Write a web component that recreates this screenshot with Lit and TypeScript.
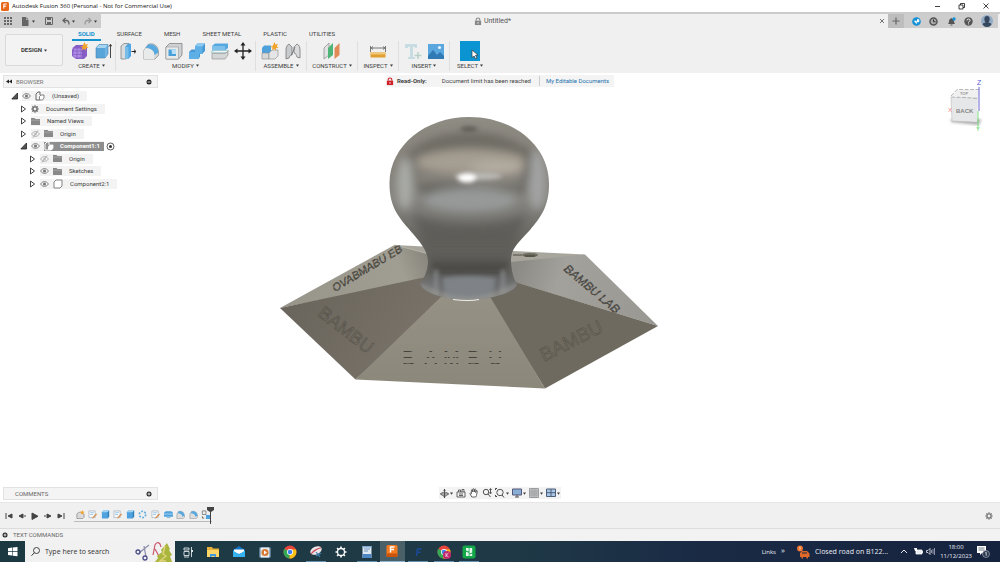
import { LitElement, html, svg, css, nothing } from "lit";
import { customElement } from "lit/decorators.js";
import { classMap } from "lit/directives/class-map.js";

const icon = (body: unknown, w = 18, h = w, box = `0 0 ${w} ${h}`) =>
  html`<svg width=${w} height=${h} viewBox=${box} aria-hidden="true">${body}</svg>`;

const caret = html`<svg class="caret" width="3" height="3" viewBox="0 0 4 4" aria-hidden="true"><path d="M0 .5h4L2 3.8z" fill="currentColor" /></svg>`;

/* ---------- ribbon glyphs, 18 x 18 ---------- */
const form = svg`
  <path d="M2 5.500 5 3h8l3 3v8l-3 3H5l-4-3V8z" fill="#8a5fc9"/>
  <path d="M3 6.500h8v9H4l-2-2z" fill="#b08be6"/>
  <path d="M6 3v13M10 3v13M1.500 9h14M2 12.500h14M12 6.500v10" stroke="#7b55ba" stroke-width=".6" fill="none"/>
  <path d="m13.500 0 1 2.500 2.500-.6-1.300 2.300 2 1.600-2.600.3-.2 2.700-1.700-2-2.300 1.400.7-2.600L9 4.700l2.700-.6z" fill="#f2a32c"/>`;
const extrude = svg`
  <path d="M2 6 5 2.500h9V12l-3 4H2z" fill="#6fb4e4"/><path d="M2 6h9v10H2z" fill="#58a5da"/>
  <path d="M2 6 5 2.500h9L11 6z" fill="#a9d5f2"/><path d="M2 6 5 2.500h9V12l-3 4H2z" fill="none" stroke="#4b84ad" stroke-width=".6"/>
  <path d="M16.500 16V3M15 4.500l1.500-2.200L18 4.500" stroke="#333" stroke-width=".9" fill="none"/>`;
const pressPull = svg`
  <path d="M2 4 5 1.500h5V14l-3 3H2z" fill="#d9dbdc" stroke="#777" stroke-width=".7"/>
  <path d="M6 5l3-3.200h3V14l-2.500 3H6z" fill="#4fa6e2"/><path d="M6 5h3.500v12H6z" fill="#78bdea"/>
  <path d="M12.500 9.500h4M15 7.700l2 1.800-2 1.800" stroke="#222" fill="none"/>`;
const fillet = svg`
  <path d="M1.500 17V9L6 2.500Q8 1.500 11 2q5 1.500 5.500 8v3.500L13 17z" fill="#d2d5d6" stroke="#888" stroke-width=".7"/>
  <path d="M6 2.500C12 1 16 5 16.500 10.500L12.500 13C12 8.500 9 6 3.500 6.200z" fill="#58a9df"/>
  <path d="M1.500 17V9l2-2.800C9 6 12 9 12.300 13v4z" fill="#e9ebeb"/>`;
const shell = svg`
  <path d="M1 5 4.500 1.500H17V13l-3.500 4H1z" fill="#cfd2d4" stroke="#777" stroke-width=".7"/>
  <path d="M1 5h12.500v12H1z" fill="#e8eaea" stroke="#888" stroke-width=".5"/>
  <path d="M3.500 7.500H11V14H3.500z" fill="#4b9fd8"/><path d="M6.500 7.500H11V12H7z" fill="#b8def5"/>`;
const combine = svg`
  <path d="M1 10 3.500 7.500H7V4l2.500-2.500H17V9l-3 3h-2v3l-2 2H1z" fill="#4598d4"/>
  <path d="M1 10h6V4.500h7.500V12H11v5H1z" fill="#5dafe6"/>
  <path d="M7 4.500 9.500 1.500H17l-2.500 3z" fill="#8bcaf0"/>`;
const split = svg`
  <path d="M1 4 4 1.500h13V6l-3 2.500H1z" fill="#56a9e0"/><path d="M1 4h13v4H1z" fill="#7fc0ea"/>
  <path d="m0 9.500 4-1h14l-3 2H0z" fill="#eef4f8" stroke="#6aa" stroke-width=".4"/>
  <path d="M1 11.500h13l3-2V13l-3 4H1z" fill="#d4d7d8" stroke="#888" stroke-width=".6"/>`;
const move = svg`<path d="M9 2v14M2 9h14" stroke="#222" stroke-width="1.300"/>
  <path d="m9 0 2.500 3.500h-5zM9 18l2.500-3.500h-5zM0 9l3.500-2.500v5zM18 9l-3.500-2.500v5z" fill="#222"/>`;
const newComp = svg`
  <path d="M1 6 3 3.500h7V10L8 12H1z" fill="#4da2dc"/><path d="M1 11h7v6H1z" fill="#d6d9da" stroke="#888" stroke-width=".6"/>
  <path d="M8 11l3-3h6v6l-3 3H8z" fill="#e3e5e6" stroke="#888" stroke-width=".6"/>
  <path d="m13.500 0 1 2.500 2.500-.6-1.300 2.300 2 1.600-2.600.3-.2 2.700-1.700-2-2.300 1.400.7-2.600L9 4.700l2.700-.6z" fill="#f2a32c"/>`;
const joint = svg`
  <path d="M2 8c0-3 1-5 3-6l3 3v8c-2 0-2 1-3 3l-3 1z" fill="#c8cbcd" stroke="#777" stroke-width=".8"/>
  <path d="M16 8c0-3-1-5-3-6l-3 3v6c2 0 2 2 3 4l3 1z" fill="#d9dbdc" stroke="#777" stroke-width=".8"/>
  <path d="M7.500 13 11 5" stroke="#666" stroke-width=".8"/>`;
const planes = svg`
  <path d="M1 6 6 1v12l-5 4z" fill="#e0e3e3" stroke="#888" stroke-width=".7"/>
  <path d="m5 6 5-5v12l-5 4z" fill="#4fb477"/><path d="m11.500 6 5-5v12l-5 4z" fill="#e08a58"/>`;
const measure = svg`
  <path d="M1.500 4v6M16.500 4v6M2 6h14M4 4.500 2.200 6 4 7.500M14 4.500 15.800 6 14 7.500" stroke="#555" stroke-width=".8" fill="none"/>
  <path d="M1.500 10.500h15v5h-15z" fill="#e0a02f"/><path d="M1.500 10.500h15v2h-15z" fill="#f1c879"/>`;
const insertText = svg`<g opacity=".55"><path d="M1 2h12v4h-2V5H9v10h2v2H4v-2h2V5H4v1H1z" fill="#a8cfd8"/>
  <path d="M14 10v7M10.500 13.500h7" stroke="#8bb9ae" stroke-width="1.500"/></g>`;
const picture = svg`<path d="M1 2h16v15H1z" fill="#5aa6df"/><path d="m1 14 5-6 4 5 3-3 4 4v3H1z" fill="#2f79b5"/>
  <circle cx="12.500" cy="5.500" r="1.600" fill="#e4f3fc"/>`;
const selectArrow = svg`<path d="M0 0h20v20H0z" fill="#0b94d2"/><path d="m12 9 6 5-2.500.3 1.500 2.700-1.500.8-1.400-2.800-2.100 1.500z" fill="#fff" stroke="#333" stroke-width=".7"/>`;

/* ---------- small glyphs ---------- */
const gear = (c: string, s = 8) =>
  icon(svg`<circle cx="5" cy="5" r="2.600" fill="none" stroke=${c} stroke-width="1.700"/>
    <path d="M5 .3v1.600M5 8.100v1.600M.3 5h1.600M8.100 5h1.600M1.700 1.700l1.100 1.100M7.200 7.200l1.100 1.100M8.300 1.700 7.200 2.800M2.800 7.200 1.700 8.300" stroke=${c} stroke-width="1.500"/>`, s, s, "0 0 10 10");
const lock = (c: string) =>
  icon(svg`<path d="M2.500 4V3a2 2 0 0 1 4 0v1" fill="none" stroke=${c} stroke-width="1.200"/><path d="M1 4h7v5H1z" fill=${c}/><path d="M4 5.500h1v2H4z" fill="#eee"/>`, 8, 9, "0 0 9 10");
const eye = (off = false) =>
  icon(svg`<path d="M.5 4Q5-1.500 9.500 4 5 9.500.5 4z" fill="none" stroke=${off ? "#aaa" : "#777"}/><circle cx="5" cy="4" r="1.700" fill=${off ? "#ccc" : "#777"}/>
  ${off ? svg`<path d="m2 8 6-8" stroke="#999" stroke-width=".8"/>` : nothing}`, 9, 8, "0 0 10 8");
const folder = icon(svg`<path d="M0 1h3.500l1 1H9v6H0z" fill="#898989"/><path d="M0 3.200h9" stroke="#b5b5b5" stroke-width=".6"/>`, 9);
const comp = (c = "#666") => icon(svg`<path d="M1 9V3l2-2h2v3M1 9h3.500" fill="none" stroke=${c}/><path d="M4.500 5.500 6 4h3v3L7.500 9h-3z" fill="#fff" stroke=${c} stroke-width=".8"/>`, 10, 10, "0 0 10 10");
const body = icon(svg`<path d="M1 3 3 1h6v6L7 9H1z" fill="#fff" stroke="#777" stroke-width=".9"/>`, 10);
const twisty = (open: boolean) =>
  open
    ? icon(svg`<path d="M6.500 1v6H.8z" fill="#555" stroke="#222" stroke-width=".8"/>`, 7, 8)
    : icon(svg`<path d="M1.500 1v6l4-3z" fill="#fff" stroke="#333" stroke-width=".9"/>`, 7, 8);
const dot = (plus: boolean) => icon(svg`<circle cx="3" cy="3" r="2.500" fill="#222"/><path d=${plus ? "M3 1.500v3M1.500 3h3" : "M1.500 3h3"} stroke="#fff" stroke-width=".8"/>`, 6);

/* ---------- timeline glyphs, 10 x 10 ---------- */
const tSketch = svg`<path d="M1 1h7v7.500H1z" fill="#f6f8fa" stroke="#9aa9b5" stroke-width=".7"/><path d="M2.500 3h4M2.500 5h3" stroke="#6aaee0" stroke-width=".7"/><path d="m9 4-4 4-.5 1.500L6 9l4-4z" fill="#d98e4b"/>`;
const tExtrude = svg`<path d="m1 2.500 1.500-2H9V7L7.500 9.500H1z" fill="#4fa2dd"/><path d="m1 2.500 1.500-2H9l-1.500 2z" fill="#a3d3f3"/><path d="M7.500 2.500 9 .5V7L7.500 9.500z" fill="#2f7fb9"/>`;
const tComp = svg`<path d="M1 4.500C2 2.500 4 2.500 5 2.500l4 2V8L7.500 9.500H1z" fill="#dadada" stroke="#888" stroke-width=".8"/><path d="m7 0 .7 1.700L9.500 2 8.200 3.200 8.300 5 7 4 5.500 5l.2-1.800L4.500 2l1.800-.3z" fill="#f2a32c"/>`;
const tFillet = svg`<path d="M1 9.500V4.500L3 1.500Q8 .5 9.500 6v2L8 9.500z" fill="#dedede" stroke="#999" stroke-width=".7"/><path d="M3 1.500C7 .5 9.300 3 9.500 6.500L7 7.500C7 5 5 3.500 1.800 3.500z" fill="#58a9df"/>`;
const tPattern = svg`<circle cx="5" cy="5" r="3.500" fill="none" stroke="#58a9df" stroke-width="1.800" stroke-dasharray="2 1.650"/>`;
const tRevolve = svg`<path d="M0 3 2 1.500h6L10 3v4.500H0z" fill="#4fa2dd"/><path d="M0 4.500h10" stroke="#c9e5f7" stroke-width=".8" fill="none"/><path d="M3 7.500h4v1.500H3z" fill="#8abfe2"/>`;
const tCopy = svg`<path d="M1.500 1h4v4h-4z" fill="#eee" stroke="#666" stroke-width=".8"/><path d="M1.500 7v2h2" fill="none" stroke="#666"/><path d="M5.500 5.500H10V10H5.500z" fill="#4fa2dd"/>`;
const timeline: [string, unknown][] = [
  ["Component", tComp], ["Sketch 1", tSketch], ["Extrude 1", tExtrude], ["Sketch 2", tSketch], ["Extrude 2", tExtrude], ["Pattern", tPattern],
  ["Sketch 3", tSketch], ["Revolve", tRevolve], ["Fillet 1", tFillet], ["Fillet 2", tFillet], ["Copy", tCopy],
];

/* ---------- taskbar glyphs, 14 x 14 ---------- */
const chromeLogo = svg`<circle cx="7" cy="7" r="6.500" fill="#e8453c"/><path d="M7 7 1.300 3.800A6.500 6.500 0 0 0 6.500 13.500z" fill="#34a853"/>
  <path d="M7 7 6.500 13.500A6.500 6.500 0 0 0 12.900 4.500H7z" fill="#fbc116"/><circle cx="7" cy="7" r="3" fill="#fff"/><circle cx="7" cy="7" r="2.300" fill="#3f82ee"/>`;
const tasks: { name: string; art: unknown; on?: boolean; run?: boolean }[] = [
  { name: "Task View", art: svg`<path d="M3 3h5v2H3zM3 6.500h5v4H3zM3 12h5M10.500 2v10" fill="none" stroke="#dde4e6" stroke-width=".9"/><path d="M10 5h2v2h-2z" fill="#dde4e6"/>` },
  { name: "File Explorer", art: svg`<path d="M1 2h5l1 1.500h6V12H1z" fill="#e9b03a"/><path d="M1 5h12v7H1z" fill="#fbd768"/><path d="M4 9h6v3H8.500v-1h-3v1H4z" fill="#3f9ae0"/>` },
  { name: "Mail", art: svg`<path d="M1 5 7 1l6 4v7H1z" fill="#1272c4"/><path d="M2 4.500h10V7l-5 2-5-2z" fill="#fff"/><path d="m1 5.500 6 4 6-4V12H1z" fill="#35b2f0"/>` },
  { name: "Movies", art: svg`<path d="M1.500 2.500h11v10h-11z" fill="#9ab7cf"/><path d="M3 2.500h8v10H3z" fill="#e8eef2"/><circle cx="7" cy="7.500" r="3.600" fill="#d57a33"/><path d="m6 5.500 3 2-3 2z" fill="#fff"/>` },
  { name: "Chrome", art: chromeLogo },
  { name: "Snipping Tool", run: true, art: svg`<ellipse cx="7" cy="5.500" rx="6" ry="3.800" transform="rotate(-25 7 5.500)" fill="#ede6e8"/><path d="M2 9C4 6 9 3 12 3" stroke="#cc4d5c" stroke-width="1.200" fill="none"/><path d="m7 7 4 5M12 8l-5 3" stroke="#3f82b5" stroke-width="1.200"/>` },
  { name: "Settings", art: svg`<circle cx="7" cy="7" r="3.500" fill="none" stroke="#fff" stroke-width="1.300"/><path d="M7 1.500v2M7 10.500v2M1.500 7h2M10.500 7h2M3.100 3.100l1.300 1.300M9.600 9.600l1.300 1.300M10.900 3.100 9.600 4.400M4.400 9.600l-1.300 1.300" stroke="#fff" stroke-width="1.600"/>` },
  { name: "Notepad", run: true, art: svg`<path d="M2.500 1h9v12h-9z" fill="#dfe9f3"/><path d="M2.500 9h9v4h-9z" fill="#4e88c4"/><path d="M4 4h6M4 6h4" stroke="#7196bd"/><path d="M2.500 1h9v1.500h-9z" fill="#7fa9d6"/>` },
  { name: "Fusion 360", on: true, art: svg`<rect x="1.500" y="1" width="11" height="12" rx="1.500" fill="#f47a1f"/><path d="M1.500 9.500h11V12q0 1-1.500 1H3q-1.500 0-1.500-1z" fill="#c9540b"/><path d="M5.500 8.500V3h4M5.500 5.500H9" fill="none" stroke="#fff" stroke-width="1.400"/>` },
  { name: "Files", run: true, art: svg`<path d="M5.500 11 6.500 4h4M6 7.300h3.500" fill="none" stroke="#1b4a9b" stroke-width="1.500"/>` },
  { name: "Chrome profile", run: true, art: svg`${chromeLogo}<circle cx="10" cy="10" r="4" fill="#c2276d"/><path d="M9 8v4M11.500 8 9.300 10l2.200 2" stroke="#fff" stroke-width=".7" fill="none"/>` },
  { name: "Bambu Studio", run: true, art: svg`<rect x=".5" y=".5" width="13" height="13" rx="2" fill="#13a74a"/><path d="M4 3h2.700v3.500L4 5.500zM4 6.700l2.700 1V11H4zM7.500 3h2.700v4.500l-2.700 1zM7.500 9.500l2.700-1V11H7.500z" fill="#e6f7ec"/>` },
];

const groups: { label: string; icons: [string, unknown][]; size?: number; cls?: string }[] = [
  { label: "CREATE", icons: [["Create Form", form], ["Extrude", extrude]] },
  { label: "MODIFY", icons: [["Press Pull", pressPull], ["Fillet", fillet], ["Shell", shell], ["Combine", combine], ["Split Body", split], ["Move", move]] },
  { label: "ASSEMBLE", icons: [["New Component", newComp], ["Joint", joint]], cls: "wide" },
  { label: "CONSTRUCT", icons: [["Offset Plane", planes]], cls: "wide" },
  { label: "INSPECT", icons: [["Measure", measure]], cls: "mid" },
  { label: "INSERT", icons: [["Insert Derive", insertText], ["Canvas", picture]], cls: "wide" },
  { label: "SELECT", icons: [["Select", selectArrow]], size: 20, cls: "last" },
];

interface Node { level: number; open?: boolean; eye?: "on" | "off"; art: unknown; text: string; sel?: boolean }
const nodes: Node[] = [
  { level: 0, open: true, eye: "on", art: comp(), text: "(Unsaved)" },
  { level: 1, art: gear("#666"), text: "Document Settings" },
  { level: 1, art: folder, text: "Named Views" },
  { level: 1, eye: "off", art: folder, text: "Origin" },
  { level: 1, open: true, eye: "on", art: comp("#fff"), text: "Component1:1", sel: true },
  { level: 2, eye: "off", art: folder, text: "Origin" },
  { level: 2, eye: "on", art: folder, text: "Sketches" },
  { level: 2, eye: "on", art: body, text: "Component2:1" },
];

@customElement("model-view")
class ModelView extends LitElement {
  static styles = css`
    :host { display: block; }
    svg { display: block; width: 100%; height: 100%; }
    .engraved { font-family: "Liberation Sans", Arial, sans-serif; }
  `;
  render() {
    const knob = "M469 117C514 117 549 146 549 184C549 206 541 217 530 230C519 242 511 248 511 260C511 270 513 278 517 284C516 291 500 296 488 298Q468 302 448 298C434 296 422 290 420 284C426 276 428 268 428 261C427 248 418 240 408 228C396 214 389.500 204 389.500 183C390 145 426 117 469 117z";
    return html`<svg viewBox="0 73 1000 429" role="img" aria-label="Hexagonal stamp with a round metal handle">
      <defs>
        <clipPath id="k"><path d=${knob} /></clipPath>
        <filter id="b2" x="-50%" y="-50%" width="200%" height="200%"><feGaussianBlur stdDeviation="2" /></filter>
        <filter id="b4" x="-50%" y="-50%" width="200%" height="200%"><feGaussianBlur stdDeviation="4" /></filter>
        <linearGradient id="v" x1="0" y1="117" x2="0" y2="300" gradientUnits="userSpaceOnUse">
          <stop offset="0" stop-color="#8f8c84" /><stop offset=".12" stop-color="#8a877f" /><stop offset=".28" stop-color="#85817a" />
          <stop offset=".45" stop-color="#85847f" /><stop offset=".58" stop-color="#73726d" /><stop offset=".7" stop-color="#62605b" />
          <stop offset=".85" stop-color="#5a5956" /><stop offset=".93" stop-color="#737577" /><stop offset="1" stop-color="#8b8c8c" />
        </linearGradient>
        <linearGradient id="ul" x1="290" y1="310" x2="425" y2="250" gradientUnits="userSpaceOnUse">
          <stop offset="0" stop-color="#98958a" /><stop offset=".8" stop-color="#a09d92" /><stop offset="1" stop-color="#88867d" />
        </linearGradient>
        <linearGradient id="ur" x1="515" y1="270" x2="655" y2="320" gradientUnits="userSpaceOnUse">
          <stop offset="0" stop-color="#8c8a85" /><stop offset=".3" stop-color="#a3a19c" /><stop offset="1" stop-color="#9a9892" />
        </linearGradient>
        <linearGradient id="fr" x1="0" y1="298" x2="0" y2="388" gradientUnits="userSpaceOnUse">
          <stop offset="0" stop-color="#959184" /><stop offset="1" stop-color="#8b877a" />
        </linearGradient>
        <linearGradient id="dl" x1="300" y1="300" x2="400" y2="360" gradientUnits="userSpaceOnUse">
          <stop offset="0" stop-color="#6b665d" /><stop offset="1" stop-color="#777168" />
        </linearGradient>
        <linearGradient id="cut" x1="0" y1="351" x2="0" y2="357.200" gradientUnits="userSpaceOnUse" spreadMethod="repeat">
          <stop offset="0" stop-color="#45433a" /><stop offset=".16" stop-color="#45433a" /><stop offset=".16" stop-color="#45433a" stop-opacity="0" /><stop offset="1" stop-color="#45433a" stop-opacity="0" />
        </linearGradient>
      </defs>
      <path d="M394.500 245 585 254.500 518 284 420 280z" fill="#a8a69c" />
      <path d="M280 308 394.500 245 430 255 440 276z" fill="url(#ul)" />
      <path d="M585 254.500 658 326 505 279 510 262z" fill="url(#ur)" />
      <path d="M280 308 440 274 445 300 355.500 379.500z" fill="url(#dl)" />
      <path d="M658 326 512 281 488 296 545 388.500z" fill="#6e6a5f" />
      <path d="M355.500 379.500 443 295 489 295 545 388.500z" fill="url(#fr)" />
      <path d="M394.500 245 426 253" stroke="#b8b6ac" stroke-width=".7" />
      <ellipse cx="530" cy="255" rx="8" ry="2" fill="#6b6a5c" /><path d="M513 255h9M525 256h10" stroke="#35352c" stroke-width=".8" />
      <g class="engraved">
        <text font-size="11" transform="translate(335 292) rotate(-31)" fill="#56544b" font-style="italic" stroke="#44423a" stroke-width=".5" stroke-dasharray="3 2">OVABMABU EB</text>
        <text font-size="12" transform="translate(563 270) rotate(40)" fill="#5a5852" font-style="italic" stroke="#3b3a36" stroke-width=".5" stroke-dasharray="3 2">BAMBU LAB</text>
        <text font-size="18" transform="translate(317 315) rotate(38)" fill="none" stroke="#4f4b42" stroke-width=".5">BAMBU</text>
        <text font-size="19" transform="translate(544 362) rotate(-27)" fill="none" stroke="#545147" stroke-width=".5">BAMBU</text>
        <text x="402 424 443 467 488" y="365" font-size="20" fill="url(#cut)">BAMBU</text>
      </g>
      <path d=${knob} fill="url(#v)" />
      <g clip-path="url(#k)">
        <g filter="url(#b4)">
          <path d="M402 160Q425 132 470 132T536 160L520 156Q470 140 420 156z" fill="#66635b" opacity=".75" />
          <ellipse cx="472" cy="162" rx="56" ry="12" fill="#a59e92" />
          <ellipse cx="497" cy="168" rx="26" ry="7" fill="#b3aca0" />
          <path d="M418 184Q445 180 470 185T522 184L516 191Q470 189 424 195z" fill="#6a6862" />
          <ellipse cx="470" cy="200" rx="46" ry="12" fill="#969998" />
          <path d="M412 214Q470 236 528 214L512 244H425z" fill="#5c5954" opacity=".75" />
          <ellipse cx="405" cy="184" rx="8" ry="26" fill="#a9aaa6" />
          <ellipse cx="537" cy="180" rx="9" ry="30" fill="#a1a3a2" />
          <path d="M418 148Q411 165 417 192" stroke="#716f69" stroke-width="4" fill="none" />
          <path d="M526 148Q530 170 522 194" stroke="#67655f" stroke-width="6" fill="none" />
          <path d="M430 262h80v12h-80z" fill="#454440" opacity=".7" />
          <path d="M412 242Q424 256 426 285" stroke="#7d7c79" stroke-width="4" fill="none" />
          <path d="M528 242Q514 256 513 280" stroke="#7a7a78" stroke-width="4" fill="none" />
        </g>
        <g filter="url(#b2)">
          <ellipse cx="469" cy="129" rx="9" ry="2.500" fill="#5c5a53" />
          <ellipse cx="478" cy="176" rx="24" ry="4" fill="#b9b7b2" /><ellipse cx="467" cy="178" rx="9" ry="4.500" fill="#fff" />
          <path d="M442 278Q468 274 496 278L490 300H448z" fill="#7f8387" />
          <path d="M436 270v28M503 270v24" stroke="#858788" stroke-width="4" /><path d="M441 276v24M497 276v22" stroke="#5e5f62" stroke-width="2" />
        </g>
        <path d="M420 285Q468 314 518 284" stroke="#a5a39a" fill="none" stroke-width="2" filter="url(#b2)" />
      </g>
      <path d="M453 299.500q16 2 26 0" stroke="#eeeeea" stroke-width="1.200" fill="none" />
    </svg>`;
  }
}

@customElement("app-root")
class AppRoot extends LitElement {
  static styles = css`
    :host { display: flex; flex-direction: column; height: 100vh; overflow: hidden; background: #fff; color: #3c3c3c;
      font: 6px/8px Roboto, "Liberation Sans", sans-serif; --ui: "Open Sans", "Noto Sans", sans-serif; }
    * { box-sizing: border-box; }
    svg { display: block; flex: none; }
    button { all: unset; box-sizing: border-box; display: flex; align-items: center; white-space: nowrap; }
    .caret { margin-left: 2px; }
    .row { display: flex; align-items: center; }
    .fill { flex: 1; }

    .title { height: 12px; padding: 0 10px 0 1px; gap: 3px; font-family: var(--ui); color: #111; }
    .title .wins { display: flex; gap: 16px; }
    .docs { height: 16px; border-top: 2px solid #cbcbcb; background: #f0f0f0; align-items: stretch; }
    .quick { width: 101px; padding: 0 4px; background: #cdcdcd; justify-content: space-between; }
    .tab { flex: 1; justify-content: center; gap: 2px; padding-left: 8px; color: #555; font-size: 7px; }
    .tabclose { padding: 0 3px; }
    .account { width: 110px; background: #cdcdcd; justify-content: space-between; padding-right: 5px; margin-right: 2px; }
    .plus { width: 16px; height: 14px; background: #bdbdbd; justify-content: center; }

    .ribbon { display: flex; height: 45px; background: #f0f0f0; padding-left: 5px; }
    .workspace { width: 58px; height: 32px; margin-top: 6px; justify-content: center; border: 1px solid #dadada; border-radius: 2px; font-weight: bold; background: #f3f3f3; }
    .main { flex: 1; padding-left: 5px; }
    .tabs { display: flex; gap: 10px; padding-left: 4px; }
    .tabs button { height: 13px; padding: 1px 6px 0; border-bottom: 2px solid transparent; }
    .tabs .active { color: #1492d0; border-color: #1492d0; font-weight: bold; }
    .groups { display: flex; }
    .group { display: flex; flex-direction: column; align-items: center; height: 30px; padding: 0 3px; border-right: 1px solid #dfdfdf; }
    .icons { display: flex; align-items: center; gap: 5px; height: 20px; }
    .group > button { height: 9px; }
    .wide { min-width: 51px; } .mid { min-width: 41px; } .last { min-width: 40px; border: 0; }

    .canvas { flex: 1; min-height: 0; position: relative; display: grid; grid-template-columns: 1fr auto 1fr; grid-template-rows: auto 1fr auto; padding: 2px 3px; }
    model-view { position: absolute; inset: 0; }
    .canvas > :not(model-view) { position: relative; }
    .panel { width: 155px; height: 13px; padding: 0 5px 0 2px; border: 1px solid #e2e2e2; background: #f4f4f4; color: #777; gap: 4px; }
    .panel.low { padding-left: 11px; grid-row: 3; color: #666; }
    .tree { list-style: none; margin: 2px 0 0; padding: 0 0 0 8px; display: grid; grid-auto-rows: 1fr; height: 100px; }
    .tree li { display: flex; align-items: center; }
    .l1 { padding-left: 9px; } .l2 { padding-left: 18px; }
    .cell { display: flex; align-items: center; gap: 4px; height: 10px; margin-left: 4px; background: #f3f3f3; }
    .name { padding: 0 8px 0 3px; height: 10px; line-height: 10px; }
    .pick { display: flex; align-items: center; height: 9px; background: #8e8e8e; color: #fff; font-weight: bold; }
    .pick .name { padding: 0 4px 0 6px; }
    .target { margin-left: 2px; }
    .notice { height: 12px; padding: 0 5px 0 0; background: #f4f4f4; gap: 3px; align-self: start; color: #444; }
    .notice .msg { padding: 0 8px 0 12px; border-right: 1px solid #ccc; line-height: 10px; }
    .notice a { color: #2272ad; text-decoration: none; padding-left: 3px; }
    .cube { justify-self: end; grid-column: 3; grid-row: 1 / 3; margin: 4px 11px 0 0; }
    .nav { grid-row: 3; grid-column: 2; justify-self: center; height: 12px; gap: 3px; padding: 0 1px; background: #f3f3f3; }
    .nav .caret { margin-left: 1px; }

    .timeline { height: 26px; background: #f0f0f0; padding: 0 7px 0 4px; border-top: 1px solid #e6e6e6; }
    .play { display: flex; gap: 3px; }
    .track { position: relative; display: grid; grid-auto-flow: column; grid-auto-columns: 1fr; width: 138px; margin-left: 8px; }
    .step { border-bottom: 1px solid #bbb; padding: 1px 0 2px; justify-content: center; }
    .marker { position: absolute; right: -2px; top: -2px; }
    .commands { height: 13px; background: #f2f2f2; border-top: 1px solid #dcdcdc; padding-left: 2px; gap: 5px; color: #666; }

    .taskbar { height: 21px; background: linear-gradient(90deg, #1c3942, #1f3a46 50%, #1a2a45 70%, #16233f); color: #e8edf2; font-family: var(--ui); }
    .start { width: 25px; height: 21px; justify-content: center; }
    .search { width: 150px; height: 21px; background: #f1f1f1; padding-left: 6px; gap: 5px; color: #333; }
    .search input { all: unset; flex: 1; min-width: 0; font: 7px/12px var(--ui); color: #333; }
    .search input::placeholder { color: #333; opacity: 1; }
    .apps { display: flex; width: 307px; height: 21px; }
    .apps button { flex: 1; justify-content: center; height: 21px; }
    .apps .run { background: linear-gradient(#6590b0, #6590b0) center bottom / 20px 1px no-repeat; }
    .apps .on { background: #4a6069; border-bottom: 1px solid #8fb5d0; }
    .tray { gap: 3px; padding-right: 10px; font-size: 7px; }
    .links { font-size: 6px; gap: 5px; margin-right: 9px; }
    .links span { font-size: 8px; align-self: start; line-height: 4px; }
    .news { padding: 0 6px 0 2px; }
    .clock { text-align: center; font-size: 6px; line-height: 9px; margin: 0 2px; }
  `;

  private tree() {
    return html`<ul class="tree">${nodes.map((n) => html`
      <li class=${`l${n.level}`}>${twisty(!!n.open)}
        <span class="cell">
          ${n.eye ? eye(n.eye === "off") : nothing}
          ${n.sel ? html`<span class="pick">${n.art}<span class="name">${n.text}</span></span>`
            : html`${n.art}<span class="name">${n.text}</span>`}
        </span>
        ${n.sel ? html`<span class="target">${icon(svg`<circle cx="4.500" cy="4.500" r="3.500" fill="#fff" stroke="#333" stroke-width=".8"/><circle cx="4.500" cy="4.500" r="1.500" fill="#333"/>`, 9)}</span>` : nothing}
      </li>`)}</ul>`;
  }

  render() {
    const g = "#666";
    return html`
      <header class="title row">
        ${icon(svg`<rect width="8" height="9" rx="1.500" fill="#e8661a"/><path d="M2.800 6.500V2h3M2.800 4.200h2.500" stroke="#fff" fill="none"/>`, 8, 9)}
        <span>Autodesk Fusion 360 (Personal - Not for Commercial Use)</span><span class="fill"></span>
        <div class="wins">
          <button aria-label="Minimise">${icon(svg`<path d="M1 4.500h5" stroke="#111" stroke-width=".8"/>`, 8)}</button>
          <button aria-label="Restore">${icon(svg`<path d="M1 3h4v4H1zM2.500 3V1.500h4v4H5" fill="none" stroke="#111" stroke-width=".8"/>`, 8)}</button>
          <button aria-label="Close">${icon(svg`<path d="m1.500 1.500 5 5M6.500 1.500l-5 5" stroke="#111" stroke-width=".8"/>`, 8)}</button>
        </div>
      </header>
      <div class="docs row">
        <div class="quick row">
          <button aria-label="Data panel">${icon(svg`<path d="M0 0h2v2H0zM3 0h2v2H3zM6 0h2v2H6zM0 3h2v2H0zM3 3h2v2H3zM6 3h2v2H6zM0 6h2v2H0zM3 6h2v2H3zM6 6h2v2H6z" fill=${g}/>`, 8)}</button>
          <button aria-label="File">${icon(svg`<path d="M1 0h4v3h2.500v6H1zM5.500 0l2 2.500h-2z" fill=${g}/>`, 9)}${caret}</button>
          <button aria-label="Save">${icon(svg`<path d="M.5.500h7v7h-7z" fill="none" stroke=${g}/><path d="M2 0h4v3H2zM2 5h4v3H2z" fill=${g}/>`, 8)}</button>
          <button aria-label="Undo">${icon(svg`<path d="M3.500 1 1 3.500 3.500 6M1 3.500h3.500Q7 3.500 7 7.500" fill="none" stroke=${g} stroke-width="1.300"/>`, 8)}${caret}</button>
          <button aria-label="Redo">${icon(svg`<path d="M4.500 1 7 3.500 4.500 6M7 3.500H3.500Q1 3.500 1 7.500" fill="none" stroke="#999" stroke-width="1.300"/>`, 8)}${caret}</button>
        </div>
        <div class="tab row">${lock("#888")}<span>Untitled*</span></div>
        <button class="tabclose" aria-label="Close tab">${icon(svg`<path d="m1 1 4 4M5 1 1 5" stroke="#555" stroke-width=".8"/>`, 6)}</button>
        <div class="account row">
          <button class="plus" aria-label="New tab">${icon(svg`<path d="M4 .5v7M.5 4h7" stroke="#666" stroke-width="1.200"/>`, 8)}</button>
          <button aria-label="Extensions">${icon(svg`<circle cx="4.500" cy="4.500" r="4.300" fill="#1492d8"/><path d="M2 4h2.500v3M5 2.500h2v2.500H5" fill="#fff" stroke="#fff" stroke-width=".5"/>`, 9)}</button>
          <button aria-label="Job status">${icon(svg`<circle cx="4.500" cy="4.500" r="3.500" fill="#aaa" stroke="#555" stroke-width="1.500"/><path d="M4.500 2.500v2.200h2" stroke="#333" fill="none"/>`, 9)}</button>
          <button aria-label="Notifications">${icon(svg`<path d="M1 7Q2 6 2 4t2.500-3Q7 2 7 4t1 3zM3.500 7.500h2v1h-2z" fill="#555"/><circle cx="7" cy="2" r="1.700" fill="#1492d8"/>`, 9)}</button>
          <button aria-label="Help">${icon(svg`<circle cx="4.500" cy="4.500" r="4.200" fill="#555"/><path d="M3 3.500Q3 2 4.500 2T6 3.500q0 .8-1.500 1.500v.6M4.500 6.500v.9" stroke="#fff" stroke-width=".9" fill="none"/>`, 9)}</button>
          <button aria-label="Account">${icon(svg`<circle cx="6" cy="6" r="6" fill="#93abc4"/><path d="M3.300 4Q3.500 1 6 1t2.700 3Q8.500 7 7.500 7.500q3 .5 3 2Q8.500 12 6 12T1.500 9.500q0-1.500 3-2Q3.500 7 3.300 4z" fill="#36485d"/>`, 12)}</button>
        </div>
      </div>
      <div class="ribbon">
        <button class="workspace">DESIGN ${caret}</button>
        <div class="main">
          <nav class="tabs">${["SOLID", "SURFACE", "MESH", "SHEET METAL", "PLASTIC", "UTILITIES"].map(
            (t, i) => html`<button class=${classMap({ active: i === 0 })}>${t}</button>`)}</nav>
          <div class="groups">${groups.map((gr) => html`
            <div class="group ${gr.cls ?? ""}">
              <div class="icons">${gr.icons.map(([n, a]) => html`<button aria-label=${n}>${icon(a, gr.size ?? 18)}</button>`)}</div>
              <button>${gr.label}${caret}</button>
            </div>`)}</div>
        </div>
      </div>
      <main class="canvas">
        <model-view></model-view>
        <section>
          <div class="panel row">${icon(svg`<path d="M3 .5v4L0 2.500zM6 .5v4L3 2.500z" fill="#222"/>`, 6, 5)}<span>BROWSER</span><span class="fill"></span>${dot(false)}</div>
          ${this.tree()}
        </section>
        <div class="notice row">${lock("#cf2027")}<b>Read-Only:</b><span class="msg">Document limit has been reached</span><a href="#">My Editable Documents</a></div>
        <div class="cube">${icon(svg`
          <defs><filter id="s"><feGaussianBlur stdDeviation="1.500"/></filter></defs>
          <path d="m3 43 28 3 2-6H3z" fill="#aaa" filter="url(#s)"/>
          <path d="m3 17 6-6h21l1 3-2 6z" fill="#f0f0f0"/><path d="M3 18h27l-1 25-25-1z" fill="#e6e7e8"/>
          <path d="m3 17 6-6.500h22M3 18l14 .5 12 1" fill="none" stroke="#999" stroke-width=".7" stroke-dasharray="4 1.500"/>
          <path d="M3 18l1 24 25 1.500" fill="none" stroke="#bbb" stroke-width=".6"/>
          <path d="M31 8v24" stroke="#6a64d6"/><path d="M30 32v18" stroke="#7bdc7b"/>
          <g font-family="Liberation Sans, sans-serif" font-weight="bold"><text x="8" y="34" font-size="6" fill="#858585">BACK</text><text x="12" y="16" font-size="4" fill="#999">TOP</text>
          <text x="29" y="6" font-size="7" font-weight="normal" fill="#5a55d0">Z</text><text x="0" y="33" font-size="6" font-weight="normal" fill="#f08080">X</text><text x="28" y="52" font-size="6" font-weight="normal" fill="#6bd56b">Y</text></g>`, 38, 54)}</div>
        <div class="panel low row"><span>COMMENTS</span><span class="fill"></span>${dot(true)}</div>
        <div class="nav row">
          <button aria-label="Orbit">${icon(svg`<path d="M5 0v10M0 5.500h10" stroke="#444"/><ellipse cx="5" cy="5.500" rx="4" ry="2" fill="none" stroke="#555" stroke-width=".8"/><path d="m5 0 1.500 2h-3zM5 10l1.500-2h-3z" fill="#444"/>`, 9, 9, "0 0 10 10")}${caret}</button>
          <button aria-label="Look at">${icon(svg`<path d="M1 4h8v5H1zM2.500 4V2h2v2M6 4V1.500h2V4M3 6h4M3 7.500h4" fill="none" stroke="#555" stroke-width=".9"/>`, 10)}</button>
          <button aria-label="Pan">${icon(svg`<path d="M2.800 9 .8 5.500q.5-1 1.700.3L2.300 2q.8-.8 1.200 0l.3 2V1q.7-.8 1.300 0l.2 3 .4-2.600q.8-.6 1.200.2L6.700 4.500l.6-1.800q1-.4 1 .6L7.500 7.500 6.800 9z" fill="#fff" stroke="#444" stroke-width=".8"/>`, 10)}</button>
          <button aria-label="Zoom">${icon(svg`<circle cx="4" cy="4" r="2.700" fill="none" stroke="#555"/><path d="m6 6 2.500 3M8.500 1v4M7.500 2l1-1.500 1 1.500M7.500 4.500l1 1.500 1-1.500" stroke="#444" fill="none" stroke-width=".9"/>`, 10)}</button>
          <button aria-label="Fit">${icon(svg`<circle cx="5" cy="4.500" r="3.200" fill="none" stroke="#555"/><path d="m7 7 2 2.500M.5 2V.5H2M.5 7v1.500H2" stroke="#444" fill="none"/>`, 10)}${caret}</button>
          <button aria-label="Display settings">${icon(svg`<path d="M.5 1h9v6h-9z" fill="#88aed6" stroke="#557"/><path d="M3 9h4M5 7v2" stroke="#555"/>`, 10)}${caret}</button>
          <button aria-label="Grid">${icon(svg`<path d="M.5.500h9v9h-9z" fill="#c4c8cc" stroke="#777" stroke-width=".6"/><path d="M3 0v10M5 0v10M7 0v10M0 3h10M0 5h10M0 7h10" stroke="#888" stroke-width=".5"/>`, 10)}${caret}</button>
          <button aria-label="Viewports">${icon(svg`<path d="M.5 1h9v7.500h-9z" fill="#a9c6e6" stroke="#4c5f78"/><path d="M5 1v7.500M.5 4.700h9" stroke="#4c5f78"/>`, 10)}${caret}</button>
        </div>
      </main>
      <div class="timeline row">
        <div class="play">
          ${[["To start", "M2 2v6M8 3v4L4 5z"], ["Back", "M6 3v4L2 5zM8 4v2"], ["Play", "M2 2v6.500l6-3.250z"], ["Forward", "M4 3v4l4-2zM2 4v2"], ["To end", "M2 3v4l4-2zM8 2v6"]].map(
            ([n, d]) => html`<button aria-label=${n}>${icon(svg`<path d=${d} fill="#444" stroke="#444" stroke-width="1"/>`, 10)}</button>`)}
        </div>
        <div class="track">${timeline.map(([n, t]) => html`<button class="step" aria-label=${n}>${icon(t, 9, 9, "0 0 10 10")}</button>`)}
          <span class="marker">${icon(svg`<path d="M0 0h7v3L4 5v12H3V5L0 3z" fill="#444"/>`, 7, 17)}</span></div>
        <span class="fill"></span>
        <button aria-label="Timeline settings">${gear("#777")}</button>
      </div>
      <div class="commands row">${dot(true)}<span>TEXT COMMANDS</span></div>
      <footer class="taskbar row">
        <button class="start" aria-label="Start">${icon(svg`<path d="M0 1.200 4 .6v3.700H0zM4.600.500 9.500 0v4.300H4.600zM0 4.900h4v3.700L0 8zM4.600 4.900h4.900v4.400l-4.900-.6z" fill="#fff"/>`, 10)}</button>
        <label class="search row">
          ${icon(svg`<circle cx="5.500" cy="3.500" r="3" fill="none" stroke="#333" stroke-width=".9"/><path d="M3.400 5.700.500 8.700" stroke="#333"/>`, 9)}
          <input type="text" placeholder="Type here to search" aria-label="Search" />
          ${icon(svg`<path d="m4 12 10-8M9 5l2 11" stroke="#8d90ad" stroke-width="1.300"/><circle cx="3" cy="11" r="2" fill="none" stroke="#4a4e88" stroke-width="1.300"/><circle cx="10" cy="17" r="2" fill="none" stroke="#4a4e88" stroke-width="1.300"/>
            <path d="M18 14 20 4q2-4 5-1l1 3M20 8l5 9" stroke="#c9566a" stroke-width="1.200" fill="none"/><path d="m32 2 3 6-1 1 3 5-2 1 2 6H20l3-4-1-2 5-4-1-2z" fill="#a9b53c"/><path d="m30 5-2 8 3 2-6 5h6" stroke="#dfd37c" stroke-width="1.500" fill="none"/>`, 40, 21)}
        </label>
        <nav class="apps">${tasks.map((t) => html`<button class=${classMap({ run: !!t.run, on: !!t.on })} aria-label=${t.name}>${icon(t.art, 14)}</button>`)}</nav>
        <span class="fill"></span>
        <div class="tray row">
          <span class="links row">Links <span>»</span></span>
          ${icon(svg`<path d="M3 8 5 6h5l2.500 2.500V12H11v1.500H9.500V12H6v1.500H4.500V12H3z" fill="#e2682a"/><path d="M5 8h5" stroke="#1b2a45"/><circle cx="3" cy="3.500" r="3" fill="#ee7430"/><path d="M3 1.800v2M3 4.500v.8" stroke="#fff" stroke-width=".8"/>`, 13, 14)}
          <span class="news">Closed road on B122...</span>
          ${icon(svg`<path d="m1 6 3-3 3 3" fill="none" stroke="#fff" stroke-width=".9"/>`, 14, 9, "-3 0 14 9")}
          ${icon(svg`<path d="M2 3h6v4H2zM8.500 4v2" fill="#e8edf2" stroke="#fff" stroke-width=".8"/><path d="M0 1h3v3H1z" fill="#fff"/>`, 9)}
          ${icon(svg`<path d="M.5 3.500h1.500L4 1.500v6l-2-2H.5z" fill="none" stroke="#fff" stroke-width=".7"/><path d="M5.500 3v3M7 2v5M8.500 1v7" stroke="#dde" stroke-width=".6"/>`, 9)}
          <div class="clock">18:00<br />11/12/2023</div>
          ${icon(svg`<path d="M0 1h9v7H5L3 10V8H0z" fill="#fff"/><path d="M1.500 3h6M1.500 5h6" stroke="#345" stroke-width=".7"/><circle cx="9" cy="9" r="3.500" fill="#2b3a50" stroke="#bbc" stroke-width=".6"/><path d="m8.300 7.800.9-.6v3.600" stroke="#fff" stroke-width=".7" fill="none"/>`, 13)}
        </div>
      </footer>`;
  }
}
